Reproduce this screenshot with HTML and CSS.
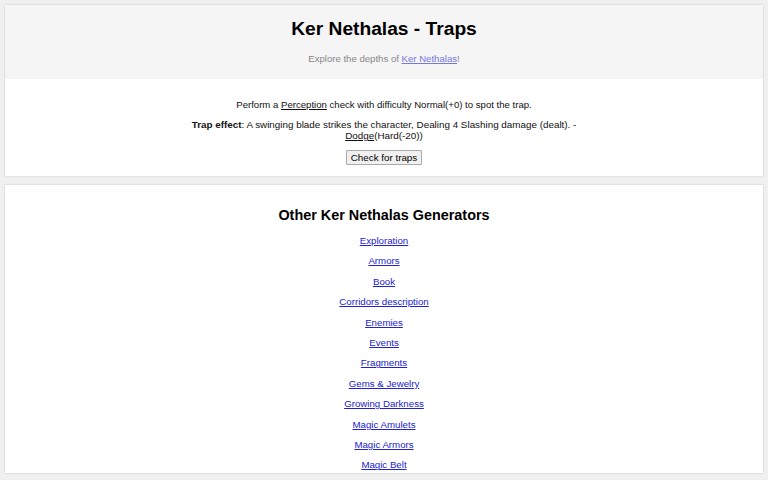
FILE: index.html
```html
<!DOCTYPE html>
<html>
<head>
<meta charset="utf-8">
<link rel="stylesheet" href="styles.css">
</head>
<body>
<div class="page">
  <div class="card top">
    <header class="hero">
      <h1 class="title">Ker Nethalas - Traps</h1>
      <p class="sub">Explore the depths of <a href="#" class="sublink">Ker Nethalas</a>!</p>
    </header>
    <section class="result">
      <p class="line">Perform a <u>Perception</u> check with difficulty Normal(+0) to spot the trap.</p>
      <p class="line effect"><b>Trap effect</b>: A swinging blade strikes the character, Dealing 4 Slashing damage (dealt). -<br><u>Dodge</u>(Hard(-20))</p>
      <button class="btn">Check for traps</button>
    </section>
  </div>
  <div class="card others">
    <h2 class="h2">Other Ker Nethalas Generators</h2>
    <ul class="links">
      <li><a href="#">Exploration</a></li>
      <li><a href="#">Armors</a></li>
      <li><a href="#">Book</a></li>
      <li><a href="#">Corridors description</a></li>
      <li><a href="#">Enemies</a></li>
      <li><a href="#">Events</a></li>
      <li><a href="#">Fragments</a></li>
      <li><a href="#">Gems &amp; Jewelry</a></li>
      <li><a href="#">Growing Darkness</a></li>
      <li><a href="#">Magic Amulets</a></li>
      <li><a href="#">Magic Armors</a></li>
      <li><a href="#">Magic Belt</a></li>
    </ul>
  </div>
</div>
</body>
</html>
```

FILE: styles.css
```css
html, body {
  margin: 0;
  padding: 0;
  height: 100%;
  overflow: hidden;
}
body {
  background: #f0f0f0;
  font-family: "Liberation Sans", Arial, sans-serif;
  font-size: 10px;
  color: #111;
}
.page {
  padding: 5px;
  display: flex;
  flex-direction: column;
  gap: 9px;
}
.card {
  background: #fff;
  box-shadow: 0 0 2px rgba(0,0,0,0.18);
}
.hero {
  background: #f5f5f5;
  height: 74px;
  box-sizing: border-box;
  padding-top: 12px;
  text-align: center;
}
.title {
  margin: 0;
  font-size: 19.2px;
  line-height: 23px;
  font-weight: bold;
  color: #000;
}
.sub {
  margin: 13px 0 0;
  font-size: 9.6px;
  line-height: 12px;
  color: #888;
}
.sublink {
  color: #7777dd;
}
.result {
  height: 97px;
  box-sizing: border-box;
  padding-top: 20px;
  text-align: center;
}
.line {
  margin: 0;
  line-height: 12px;
  font-size: 9.6px;
}
.effect {
  margin-top: 8px;
  font-size: 9.85px;
  line-height: 11px;
}
.btn {
  margin-top: 9px;
  font-family: "Liberation Sans", Arial, sans-serif;
  font-size: 9.8px;
  line-height: 12px;
  padding: 0 4px;
  height: 15px;
  background: #f0f0f0;
  border: 1px solid #aaa;
  border-radius: 1px;
  color: #000;
}
.others {
  height: 288px;
  box-sizing: border-box;
  padding-top: 21px;
  text-align: center;
}
.h2 {
  margin: 0;
  font-size: 14.4px;
  line-height: 18px;
  font-weight: bold;
  color: #000;
}
.links {
  list-style: none;
  margin: 7px 0 0;
  padding: 0;
}
.links li {
  line-height: 20.4px;
  font-size: 9.7px;
}
.links a {
  color: #2222cc;
}
```
